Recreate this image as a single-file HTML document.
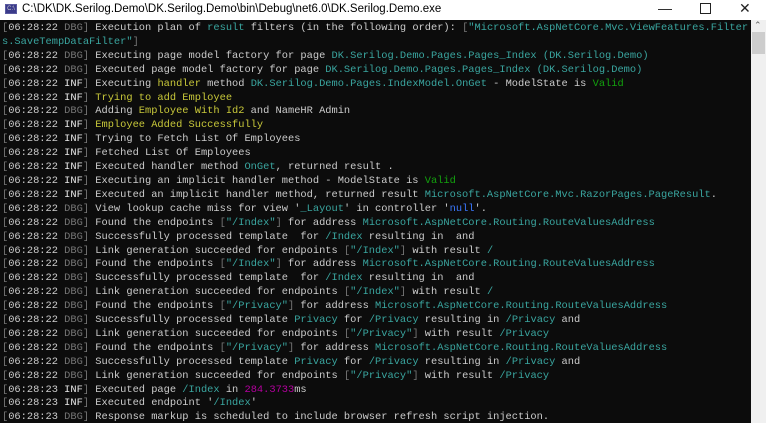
<!DOCTYPE html>
<html><head><meta charset="utf-8"><style>
*{margin:0;padding:0;box-sizing:border-box}
body{width:768px;height:423px;overflow:hidden;background:#fff;position:relative;font-family:"Liberation Sans",sans-serif}
.title{position:absolute;left:0;top:0;width:768px;height:20px;background:#fff;font-size:11.5px;color:#000;line-height:18px}
.title .ic{position:absolute;left:5px;top:4px;width:12px;height:10px;background:#3a3a8a;border:1px solid #5a5aa0;color:#ccc;font-size:6px;line-height:8px;text-align:center}
.title .t{position:absolute;left:22px;top:0}
.ctl{position:absolute;top:0;font-size:14px;color:#222;line-height:16px}
.con{position:absolute;left:0;top:20px;width:751px;height:403px;background:#0c0c0c;overflow:hidden}
.sb{position:absolute;left:751px;top:20px;width:15px;height:403px;background:#f0f0f0}
.sb .th{position:absolute;left:1px;top:12px;width:13px;height:22px;background:#cdcdcd}
.sb .ar{position:absolute;left:3px;top:0;font-size:9px;color:#606060}
pre{font-family:"Liberation Mono",monospace;font-size:10.37px;line-height:13.9px;color:#cccccc;padding:2px 0 0 2px;white-space:pre}
.g{color:#767676}.c{color:#3aa6a0}.y{color:#c8c83a}.gr{color:#13a10e}.m{color:#b4009e}.b{color:#3b78ff}.w{color:#e8e8e8}
</style></head><body>
<div class="title"><div class="ic">C:\</div><div class="t">C:\DK\DK.Serilog.Demo\DK.Serilog.Demo\bin\Debug\net6.0\DK.Serilog.Demo.exe</div>
<div class="ctl" style="left:658px">&#8212;</div><div class="ctl" style="left:700px;top:1px;width:11px;height:11px;border:1px solid #222;margin-top:2px"></div><div class="ctl" style="left:739px">&#10005;</div></div>
<div class="con"><pre><span class="g">[</span>06:28:22 <span class="g">DBG]</span> Execution plan of <span class="c">result</span> filters (in the following order): <span class="g">[</span><span class="c">"Microsoft.AspNetCore.Mvc.ViewFeatures.Filter</span>
<span class="c">s.SaveTempDataFilter"</span><span class="g">]</span>
<span class="g">[</span>06:28:22 <span class="g">DBG]</span> Executing page model factory for page <span class="c">DK.Serilog.Demo.Pages.Pages_Index (DK.Serilog.Demo)</span>
<span class="g">[</span>06:28:22 <span class="g">DBG]</span> Executed page model factory for page <span class="c">DK.Serilog.Demo.Pages.Pages_Index (DK.Serilog.Demo)</span>
<span class="g">[</span>06:28:22 <span class="w">INF</span><span class="g">]</span> Executing <span class="y">handler</span> method <span class="c">DK.Serilog.Demo.Pages.IndexModel.OnGet</span> - ModelState is <span class="gr">Valid</span>
<span class="g">[</span>06:28:22 <span class="w">INF</span><span class="g">]</span> <span class="y">Trying to add Employee</span>
<span class="g">[</span>06:28:22 <span class="g">DBG]</span> Adding <span class="y">Employee With Id2</span> and NameHR Admin
<span class="g">[</span>06:28:22 <span class="w">INF</span><span class="g">]</span> <span class="y">Employee Added Successfully</span>
<span class="g">[</span>06:28:22 <span class="w">INF</span><span class="g">]</span> Trying to Fetch List Of Employees
<span class="g">[</span>06:28:22 <span class="w">INF</span><span class="g">]</span> Fetched List Of Employees
<span class="g">[</span>06:28:22 <span class="w">INF</span><span class="g">]</span> Executed handler method <span class="c">OnGet</span>, returned result .
<span class="g">[</span>06:28:22 <span class="w">INF</span><span class="g">]</span> Executing an implicit handler method - ModelState is <span class="gr">Valid</span>
<span class="g">[</span>06:28:22 <span class="w">INF</span><span class="g">]</span> Executed an implicit handler method, returned result <span class="c">Microsoft.AspNetCore.Mvc.RazorPages.PageResult</span>.
<span class="g">[</span>06:28:22 <span class="g">DBG]</span> View lookup cache miss for view '<span class="c">_Layout</span>' in controller '<span class="b">null</span>'.
<span class="g">[</span>06:28:22 <span class="g">DBG]</span> Found the endpoints <span class="g">[</span><span class="c">"/Index"</span><span class="g">]</span> for address <span class="c">Microsoft.AspNetCore.Routing.RouteValuesAddress</span>
<span class="g">[</span>06:28:22 <span class="g">DBG]</span> Successfully processed template  for <span class="c">/Index</span> resulting in  and
<span class="g">[</span>06:28:22 <span class="g">DBG]</span> Link generation succeeded for endpoints <span class="g">[</span><span class="c">"/Index"</span><span class="g">]</span> with result <span class="c">/</span>
<span class="g">[</span>06:28:22 <span class="g">DBG]</span> Found the endpoints <span class="g">[</span><span class="c">"/Index"</span><span class="g">]</span> for address <span class="c">Microsoft.AspNetCore.Routing.RouteValuesAddress</span>
<span class="g">[</span>06:28:22 <span class="g">DBG]</span> Successfully processed template  for <span class="c">/Index</span> resulting in  and
<span class="g">[</span>06:28:22 <span class="g">DBG]</span> Link generation succeeded for endpoints <span class="g">[</span><span class="c">"/Index"</span><span class="g">]</span> with result <span class="c">/</span>
<span class="g">[</span>06:28:22 <span class="g">DBG]</span> Found the endpoints <span class="g">[</span><span class="c">"/Privacy"</span><span class="g">]</span> for address <span class="c">Microsoft.AspNetCore.Routing.RouteValuesAddress</span>
<span class="g">[</span>06:28:22 <span class="g">DBG]</span> Successfully processed template <span class="c">Privacy</span> for <span class="c">/Privacy</span> resulting in <span class="c">/Privacy</span> and
<span class="g">[</span>06:28:22 <span class="g">DBG]</span> Link generation succeeded for endpoints <span class="g">[</span><span class="c">"/Privacy"</span><span class="g">]</span> with result <span class="c">/Privacy</span>
<span class="g">[</span>06:28:22 <span class="g">DBG]</span> Found the endpoints <span class="g">[</span><span class="c">"/Privacy"</span><span class="g">]</span> for address <span class="c">Microsoft.AspNetCore.Routing.RouteValuesAddress</span>
<span class="g">[</span>06:28:22 <span class="g">DBG]</span> Successfully processed template <span class="c">Privacy</span> for <span class="c">/Privacy</span> resulting in <span class="c">/Privacy</span> and
<span class="g">[</span>06:28:22 <span class="g">DBG]</span> Link generation succeeded for endpoints <span class="g">[</span><span class="c">"/Privacy"</span><span class="g">]</span> with result <span class="c">/Privacy</span>
<span class="g">[</span>06:28:23 <span class="w">INF</span><span class="g">]</span> Executed page <span class="c">/Index</span> in <span class="m">284.3733</span>ms
<span class="g">[</span>06:28:23 <span class="w">INF</span><span class="g">]</span> Executed endpoint '<span class="c">/Index</span>'
<span class="g">[</span>06:28:23 <span class="g">DBG]</span> Response markup is scheduled to include browser refresh script injection.</pre></div>
<div class="sb"><div class="ar">&#8963;</div><div class="th"></div></div>
</body></html>
